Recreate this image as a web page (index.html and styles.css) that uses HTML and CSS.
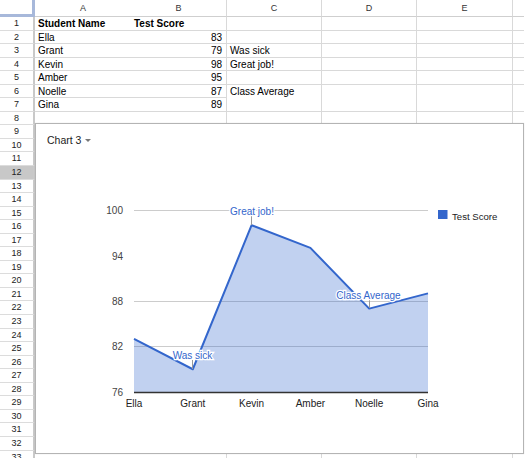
FILE: index.html
```html
<!DOCTYPE html>
<html>
<head>
<meta charset="utf-8">
<link rel="stylesheet" href="styles.css">
</head>
<body>
<div class="sheet">
  <div class="grid">
    <div class="corner"></div><div class="h">A</div><div class="h">B</div><div class="h">C</div><div class="h">D</div><div class="h">E</div><div class="h f"></div>

    <div class="n">1</div><div class="c a b">Student Name</div><div class="c b">Test Score</div><div class="c"></div><div class="c"></div><div class="c"></div><div class="c f"></div>
    <div class="n">2</div><div class="c a">Ella</div><div class="c r">83</div><div class="c"></div><div class="c"></div><div class="c"></div><div class="c f"></div>
    <div class="n">3</div><div class="c a">Grant</div><div class="c r">79</div><div class="c">Was sick</div><div class="c"></div><div class="c"></div><div class="c f"></div>
    <div class="n">4</div><div class="c a">Kevin</div><div class="c r">98</div><div class="c">Great job!</div><div class="c"></div><div class="c"></div><div class="c f"></div>
    <div class="n">5</div><div class="c a">Amber</div><div class="c r">95</div><div class="c"></div><div class="c"></div><div class="c"></div><div class="c f"></div>
    <div class="n">6</div><div class="c a">Noelle</div><div class="c r">87</div><div class="c open">Class Average</div><div class="c open"></div><div class="c open"></div><div class="c f open"></div>
    <div class="n">7</div><div class="c a">Gina</div><div class="c r">89</div><div class="c"></div><div class="c"></div><div class="c"></div><div class="c f"></div>
    <div class="n">8</div><div class="c a"></div><div class="c"></div><div class="c"></div><div class="c"></div><div class="c"></div><div class="c f"></div>
    <div class="n">9</div><div class="c a"></div><div class="c"></div><div class="c"></div><div class="c"></div><div class="c"></div><div class="c f"></div>
    <div class="n">10</div><div class="c a"></div><div class="c"></div><div class="c"></div><div class="c"></div><div class="c"></div><div class="c f"></div>
    <div class="n">11</div><div class="c a"></div><div class="c"></div><div class="c"></div><div class="c"></div><div class="c"></div><div class="c f"></div>
    <div class="n sel">12</div><div class="c a"></div><div class="c"></div><div class="c"></div><div class="c"></div><div class="c"></div><div class="c f"></div>
    <div class="n">13</div><div class="c a"></div><div class="c"></div><div class="c"></div><div class="c"></div><div class="c"></div><div class="c f"></div>
    <div class="n">14</div><div class="c a"></div><div class="c"></div><div class="c"></div><div class="c"></div><div class="c"></div><div class="c f"></div>
    <div class="n">15</div><div class="c a"></div><div class="c"></div><div class="c"></div><div class="c"></div><div class="c"></div><div class="c f"></div>
    <div class="n">16</div><div class="c a"></div><div class="c"></div><div class="c"></div><div class="c"></div><div class="c"></div><div class="c f"></div>
    <div class="n">17</div><div class="c a"></div><div class="c"></div><div class="c"></div><div class="c"></div><div class="c"></div><div class="c f"></div>
    <div class="n">18</div><div class="c a"></div><div class="c"></div><div class="c"></div><div class="c"></div><div class="c"></div><div class="c f"></div>
    <div class="n">19</div><div class="c a"></div><div class="c"></div><div class="c"></div><div class="c"></div><div class="c"></div><div class="c f"></div>
    <div class="n">20</div><div class="c a"></div><div class="c"></div><div class="c"></div><div class="c"></div><div class="c"></div><div class="c f"></div>
    <div class="n">21</div><div class="c a"></div><div class="c"></div><div class="c"></div><div class="c"></div><div class="c"></div><div class="c f"></div>
    <div class="n">22</div><div class="c a"></div><div class="c"></div><div class="c"></div><div class="c"></div><div class="c"></div><div class="c f"></div>
    <div class="n">23</div><div class="c a"></div><div class="c"></div><div class="c"></div><div class="c"></div><div class="c"></div><div class="c f"></div>
    <div class="n">24</div><div class="c a"></div><div class="c"></div><div class="c"></div><div class="c"></div><div class="c"></div><div class="c f"></div>
    <div class="n">25</div><div class="c a"></div><div class="c"></div><div class="c"></div><div class="c"></div><div class="c"></div><div class="c f"></div>
    <div class="n">26</div><div class="c a"></div><div class="c"></div><div class="c"></div><div class="c"></div><div class="c"></div><div class="c f"></div>
    <div class="n">27</div><div class="c a"></div><div class="c"></div><div class="c"></div><div class="c"></div><div class="c"></div><div class="c f"></div>
    <div class="n">28</div><div class="c a"></div><div class="c"></div><div class="c"></div><div class="c"></div><div class="c"></div><div class="c f"></div>
    <div class="n">29</div><div class="c a"></div><div class="c"></div><div class="c"></div><div class="c"></div><div class="c"></div><div class="c f"></div>
    <div class="n">30</div><div class="c a"></div><div class="c"></div><div class="c"></div><div class="c"></div><div class="c"></div><div class="c f"></div>
    <div class="n">31</div><div class="c a"></div><div class="c"></div><div class="c"></div><div class="c"></div><div class="c"></div><div class="c f"></div>
    <div class="n">32</div><div class="c a"></div><div class="c"></div><div class="c"></div><div class="c"></div><div class="c"></div><div class="c f"></div>
    <div class="n">33</div><div class="c a"></div><div class="c"></div><div class="c"></div><div class="c"></div><div class="c"></div><div class="c f"></div>
  </div>

  <div class="chart">
    <div class="chart-title">Chart 3 <span class="caret"></span></div>
    <svg class="plot" width="487" height="307" viewBox="0 0 487 307" xmlns="http://www.w3.org/2000/svg">
      <g transform="translate(-36,-146)" font-family="'Liberation Sans', Arial, sans-serif" font-size="10">
        <line x1="134" y1="210.5" x2="428" y2="210.5" stroke="#cccccc" stroke-width="1"/>
        <line x1="134" y1="301.5" x2="428" y2="301.5" stroke="#cccccc" stroke-width="1"/>
        <line x1="134" y1="346.5" x2="428" y2="346.5" stroke="#cccccc" stroke-width="1"/>
        <polygon points="134,338.9 192.8,369.25 251.6,225.2 310.4,247.9 369.2,308.6 428,293.4 428,392 134,392" fill="#3366cc" fill-opacity="0.3"/>
        <polyline points="134,338.9 192.8,369.25 251.6,225.2 310.4,247.9 369.2,308.6 428,293.4" fill="none" stroke="#3366cc" stroke-width="2" stroke-linejoin="round"/>
        <line x1="134" y1="392.5" x2="428" y2="392.5" stroke="#333333" stroke-width="1.3"/>

        <line x1="251.5" y1="216" x2="251.5" y2="225" stroke="#999999" stroke-width="1"/>
        <line x1="192.5" y1="360" x2="192.5" y2="369" stroke="#999999" stroke-width="1"/>
        <line x1="369.5" y1="300" x2="369.5" y2="308" stroke="#999999" stroke-width="1"/>
        <g fill="#3366cc" stroke="#ffffff" stroke-width="2.5" paint-order="stroke" text-anchor="middle">
          <text x="252" y="215">Great job!</text>
          <text x="192.5" y="359">Was sick</text>
          <text x="368.5" y="299">Class Average</text>
        </g>

        <g fill="#444444" text-anchor="end">
          <text x="123" y="213.5">100</text>
          <text x="123" y="259.5">94</text>
          <text x="123" y="304.5">88</text>
          <text x="123" y="349.5">82</text>
          <text x="123" y="395.5">76</text>
        </g>
        <g fill="#222222" text-anchor="middle">
          <text x="134" y="406.5">Ella</text>
          <text x="192.8" y="406.5">Grant</text>
          <text x="251.6" y="406.5">Kevin</text>
          <text x="310.4" y="406.5">Amber</text>
          <text x="369.2" y="406.5">Noelle</text>
          <text x="428" y="406.5">Gina</text>
        </g>

        <rect x="438" y="210" width="9.5" height="9" fill="#3366cc"/>
        <text x="452" y="219.5" fill="#222222" font-size="9.6">Test Score</text>
      </g>
    </svg>
  </div>
</div>
</body>
</html>
```

FILE: styles.css
```css
html, body {
  margin: 0;
  padding: 0;
  background: #ffffff;
}

body {
  width: 528px;
  height: 458px;
  overflow: hidden;
  font-family: "Liberation Sans", Arial, sans-serif;
  font-size: 10px;
  color: #000000;
}

.sheet {
  position: relative;
  width: 528px;
  height: 458px;
  overflow: hidden;
}

.grid {
  display: grid;
  grid-template-columns: 35px 96px 96px 95px 95px 96px 11px;
  grid-template-rows: 17px;
  grid-auto-rows: 13.55px;
}

.corner {
  box-sizing: border-box;
  border-right: 3px solid #a7b8da;
  border-bottom: 3px solid #a7b8da;
  background: #ffffff;
}

.h {
  box-sizing: border-box;
  border-bottom: 1px solid #cfcfcf;
  border-right: 1px solid #d9d9d9;
  text-align: center;
  line-height: 17px;
  font-size: 9px;
  color: #333333;
}

.h:nth-child(2) {
  border-right: none;
}

.n {
  box-sizing: border-box;
  border-right: 2px solid #c9c9c9;
  border-bottom: 1px solid #dcdcdc;
  text-align: center;
  font-size: 9px;
  color: #222222;
  line-height: 13px;
}

.n.sel {
  background: #c8c8c8;
}

.c {
  box-sizing: border-box;
  border-right: 1px solid #d9d9d9;
  border-bottom: 1px solid #d9d9d9;
  padding: 0 3px;
  white-space: nowrap;
  overflow: visible;
  line-height: 13px;
  position: relative;
  z-index: 1;
}

.c.a {
  border-right: none;
}

.c.f,
.h.f {
  border-right: none;
}

.c.open {
  border-bottom: none;
}

.c.b {
  font-weight: bold;
}

.c.r {
  text-align: right;
  padding-right: 4px;
}

.chart {
  position: absolute;
  left: 35px;
  top: 123px;
  width: 489px;
  height: 331px;
  box-sizing: border-box;
  border: 1px solid #b4b4b4;
  box-shadow: 0 0 1px rgba(0, 0, 0, 0.15);
  background: #ffffff;
  z-index: 2;
}

.chart-title {
  display: flex;
  align-items: center;
  gap: 4px;
  height: 22px;
  box-sizing: border-box;
  padding: 10px 0 0 11px;
  font-size: 10.5px;
  line-height: 12px;
  color: #222222;
}

.caret {
  width: 0;
  height: 0;
  border-left: 3px solid transparent;
  border-right: 3px solid transparent;
  border-top: 3px solid #777777;
  margin-top: 1px;
}

.plot {
  display: block;
}
```
